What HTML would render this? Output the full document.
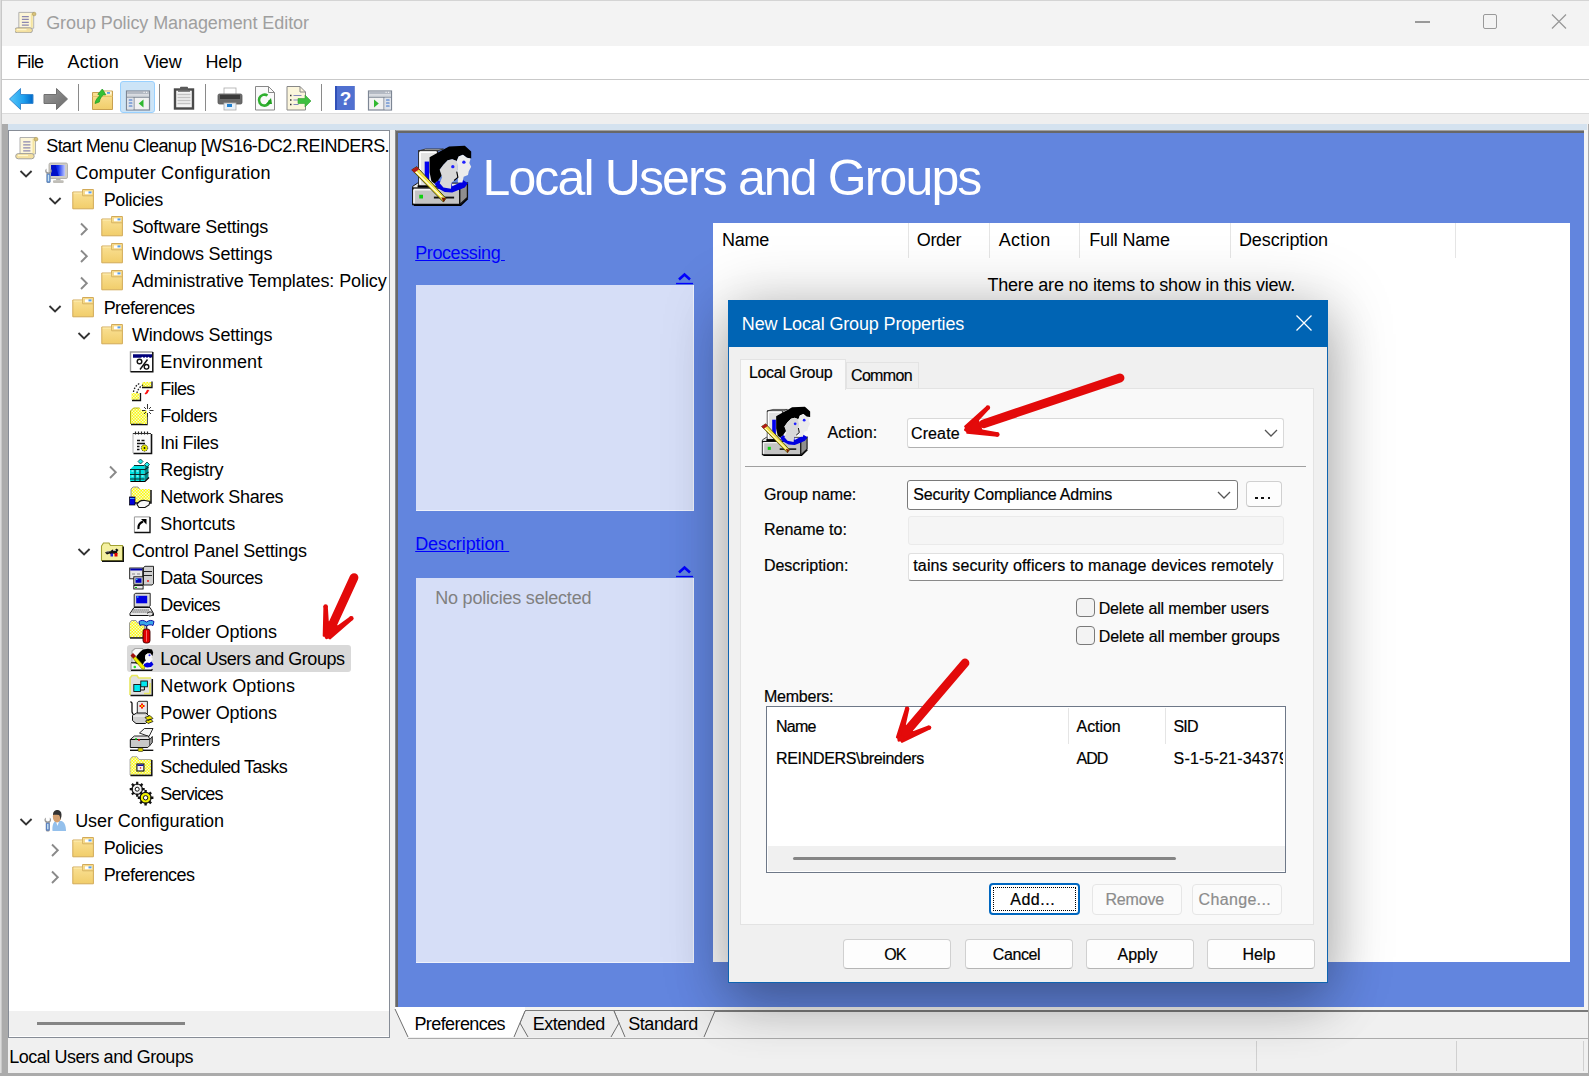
<!DOCTYPE html>
<html><head><meta charset="utf-8"><style>
html,body{margin:0;padding:0;width:1589px;height:1076px;overflow:hidden;background:#f0f0f0}
body{position:relative;font-family:"Liberation Sans",sans-serif}
div,svg{position:absolute}
.t{white-space:pre;line-height:1}
</style></head><body>
<svg width="0" height="0" style="left:0;top:0"><defs><linearGradient id="gscreen" x1="0" x2="1" y1="0" y2="0"><stop offset="0" stop-color="#0000d0"/><stop offset="0.5" stop-color="#1030f0"/><stop offset="1" stop-color="#c0c8ff"/></linearGradient>
<linearGradient id="gfold" x1="0" x2="0" y1="0" y2="1"><stop offset="0" stop-color="#fbe39a"/><stop offset="1" stop-color="#f1cd6a"/></linearGradient>
<linearGradient id="gback" x1="0" x2="1" y1="0" y2="0"><stop offset="0" stop-color="#58c8fa"/><stop offset="0.6" stop-color="#1fa0ee"/><stop offset="1" stop-color="#0068c8"/></linearGradient>
<linearGradient id="gfwd" x1="0" x2="1" y1="0" y2="1"><stop offset="0" stop-color="#9a9a9a"/><stop offset="1" stop-color="#6a6a6a"/></linearGradient>
<pattern id="pdot" width="3" height="3" patternUnits="userSpaceOnUse"><rect width="3" height="3" fill="#ffff00"/><rect width="1.5" height="1.5" fill="#f4f4d8"/><rect x="1.5" y="1.5" width="1.5" height="1.5" fill="#f4f4d8"/></pattern>

<g id="i-scroll">
 <path d="M4 2.5h15.5v16.5H4z" fill="#fdf6d8" stroke="#a8a8a8" stroke-width="0.9"/>
 <path d="M17.5 3.5v15" stroke="#f4e4a0" stroke-width="2"/>
 <path d="M7.2 6.8h7.2M7.2 9.8h7.2M7.2 12.8h7.2M7.2 15.8h7.2" stroke="#8c88b0" stroke-width="1.3"/>
 <circle cx="20" cy="4.2" r="1.9" fill="#d8c078" stroke="#a89858" stroke-width="0.6"/>
 <rect x="-0.3" y="18.6" width="18.5" height="5.2" rx="2.6" fill="#f4e0a0" stroke="#9a9a9a" stroke-width="0.9"/>
 <path d="M2 20.5h10" stroke="#fff8d0" stroke-width="1.2"/>
</g>
<g id="i-computer">
 <rect x="5" y="3" width="18.5" height="15.5" rx="1.5" fill="#cfcdc6" stroke="#a8a6a0" stroke-width="0.8"/>
 <rect x="7.2" y="5" width="13.8" height="11" fill="url(#gscreen)"/>
 <path d="M7.2 5h4.5l3 11H7.2z" fill="#0010c8"/>
 <path d="M12.5 18.5h3.5l1 2h-5.5z" fill="#b8b6b0"/>
 <rect x="9" y="20.3" width="10.7" height="2.7" rx="1" fill="#c0beb8"/>
 <path d="M2.5 8.5c-1.5 1-1.8 3-0.6 4.5l0.6 0.6v8c0 1 0.8 1.5 2 1.5s2-0.5 2-1.5v-8l0.6-0.6c1.2-1.5 0.9-3.5-0.6-4.5v3l-2 1l-2-1z" fill="#9a9a9a"/>
 <rect x="2.6" y="13.8" width="3.8" height="9" rx="1.2" fill="#5a88c8"/>
 <rect x="3.8" y="14.8" width="1.4" height="6.5" fill="#c8e4f4"/>
</g>
<g id="i-folder">
 <path d="M0.8 5h9.8v-2.5h10.8v19.3H0.8z" fill="url(#gfold)" stroke="#d2aa58" stroke-width="1"/>
 <rect x="12" y="3.6" width="8.5" height="4.6" fill="#f3d27a"/>
 <rect x="12.8" y="4.3" width="7" height="3" fill="#ffffff"/>
 <rect x="16.5" y="4.4" width="3" height="2" fill="#5aa0e8"/>
 <path d="M10.6 5v3.8h10.8" stroke="#d8b462" stroke-width="1" fill="none"/>
 <path d="M1.5 6h8.5" stroke="#fff3c0" stroke-width="0.8"/>
</g>
<g id="i-cpfolder">
 <path d="M0.5 8l2-3h5.5l1.5 2.5H21.5V22.5H0.5z" fill="#f4f0a0" stroke="#a0a030" stroke-width="1.1"/>
 <path d="M1 23.3H22.3V8.5" stroke="#111" stroke-width="1.4" fill="none"/>
 <path d="M4 14.5l3-1.5l2 0.5l2.5-2l2 1l2-2l2 1.5l-1.5 2l0.5 1.5l-2 1l-2-1l-1.5 1.5l-2.5-1.5l-2.5 1z" fill="#111"/>
 <rect x="13.5" y="15" width="3" height="3.5" fill="#e00000"/>
 <rect x="9.5" y="15.5" width="2.5" height="3" fill="#2020d0"/>
 <path d="M5 13.8h3M12 12.5h3" stroke="#c8c8c8" stroke-width="0.8"/>
</g>
<g id="i-env">
 <rect x="0.5" y="3" width="22.3" height="19.8" fill="#ffffff"/>
 <path d="M0.5 22.8V3H22.8" stroke="#9a9a9a" stroke-width="1.4" fill="none"/>
 <path d="M0.5 22.8H22.8V3" stroke="#111" stroke-width="1.5" fill="none"/>
 <path d="M3 5.2H22V8.2L20 9L18.5 7.8L17 9L15.5 7.8L14 9L12.5 7.8L11 8.8H3z" fill="#00007a"/>
 <circle cx="9.5" cy="12.5" r="2.3" fill="none" stroke="#111" stroke-width="1.4"/>
 <circle cx="16.5" cy="17.8" r="2.3" fill="none" stroke="#111" stroke-width="1.4"/>
 <path d="M17.5 10.5L10 20.5" stroke="#111" stroke-width="1.4"/>
</g>
<g id="i-files">
 <path d="M12 6h9.5v5.5H12z" fill="url(#pdot)"/>
 <path d="M12 11.5h10V5.5" stroke="#111" stroke-width="1.3" fill="none"/>
 <path d="M1.5 17h8v7h-8z" fill="url(#pdot)"/>
 <path d="M2 24.5h8.5V17" stroke="#111" stroke-width="1.3" fill="none"/>
 <path d="M3.5 16c0.5-4 3-7 6.5-9M7 17c0.5-3 2.5-6 6-8" stroke="#222" stroke-width="1.3" stroke-dasharray="1.6 1.4" fill="none"/>
 <path d="M14.5 17.5l1.5-1.5l0.5-1.5l1.5-1l1.5 1.5l-1.2 0.5l-0.5 1.5l-2 1.5z" fill="#ff1010"/>
</g>
<g id="i-folders">
 <path d="M0.5 8l3-3h6l2.5 2.5V21H0.5z" fill="url(#pdot)"/>
 <path d="M1 21.5h16v-10" stroke="#111" stroke-width="1.4" fill="none"/>
 <path d="M12 7.5h5V21H12" fill="url(#pdot)"/>
 <path d="M0.5 21V8l3-3h6" stroke="#a8a800" stroke-width="0.9" fill="none"/>
 <path d="M17.5 1v5M17.5 10v4M12 7.5h3.5M19.5 7.5h4M14 4l2 2M21 4l-2 2M14 11l2-2M21 11l-2-2" stroke="#333" stroke-width="1"/>
</g>
<g id="i-ini">
 <rect x="3" y="3" width="18" height="20.5" rx="1" fill="#fbfbfb"/>
 <path d="M3 23V3" stroke="#c0c0c0" stroke-width="1.2"/>
 <path d="M3.5 23.5H21.5V4" stroke="#111" stroke-width="1.6" fill="none"/>
 <path d="M3 3.5H21" stroke="#333" stroke-width="1"/>
 <path d="M5.5 1.5v3M8.5 1.5v3M11.5 1.5v3M14.5 1.5v3M17.5 1.5v3" stroke="#222" stroke-width="1.2"/>
 <path d="M7 10.5h3M11.5 10.5h3M7 13.5h8M7 16.5h2.5M7 19.5h2.5" stroke="#111" stroke-width="1.4"/>
 <circle cx="14.5" cy="18" r="3.2" fill="#e8e800" stroke="#333" stroke-width="0.9" stroke-dasharray="1.3 0.8"/>
 <circle cx="14.5" cy="18" r="0.9" fill="#111"/>
</g>
<g id="i-registry">
 <path d="M0 12.5l4-4h10.5v16H0z" fill="#00e0e0"/>
 <path d="M14.5 8.5l4-2.5v14.5l-4 4z" fill="#008a8a"/>
 <path d="M0 12.5h14.5M0 17.5h14.5M0 22h14.5M5 12.5v12M10 12.5v12M4 8.5h10.5M14.5 13l4-3M14.5 18l4-3" stroke="#0a2a2a" stroke-width="1.1"/>
 <path d="M0.5 24.5h14.5l4-4" stroke="#000" stroke-width="1.2" fill="none"/>
 <path d="M1.5 14h2M6.5 14h2M1.5 19h2M6.5 19h2M11.5 19h2" stroke="#d8ffff" stroke-width="1.2"/>
 <path d="M8 4.5l2.5-2.5l2.5 2.5l-2.5 2.5z" fill="#20e8e8" stroke="#0a3a3a" stroke-width="0.8"/>
 <path d="M14.5 7.5l2.5-2.5l2.5 2.5l-2.5 2.5z" fill="#20e8e8" stroke="#0a3a3a" stroke-width="0.8"/>
</g>
<g id="i-shares">
 <path d="M1 5l2-2h5l1.5 2H20.5V18.5H1z" fill="url(#pdot)"/>
 <path d="M1 18.5V5l2-2h5l1.5 2" stroke="#888" stroke-width="0.9" fill="none"/>
 <path d="M2 19h19V6" stroke="#111" stroke-width="1.5" fill="none"/>
 <path d="M7 20.5c1.5-3 5-4.5 8-4l5 1l-1 3.5l-4 2.5h-6z" fill="#f8f8f8" stroke="#111" stroke-width="1.1"/>
 <rect x="-0.5" y="13" width="5.5" height="8" fill="#0000d8" stroke="#000" stroke-width="0.7"/>
 <path d="M0 14.5h4.5" stroke="#40a0ff" stroke-width="1"/>
</g>
<g id="i-shortcut">
 <rect x="4.4" y="5.9" width="15.6" height="15.6" fill="#fff"/>
 <path d="M4.4 21.5V5.9H20" stroke="#9a9a9a" stroke-width="1" fill="none"/>
 <path d="M4.4 21.5H20V5.9" stroke="#111" stroke-width="1.4" fill="none"/>
 <path d="M8.5 18c-0.5-3 1-6 4.5-7.5" stroke="#000" stroke-width="2.2" fill="none"/>
 <path d="M11 8h5.5v5.5z" fill="#000"/>
</g>
<g id="i-datasrc">
 <rect x="-0.3" y="3" width="13" height="10.8" fill="#e8e8e8" stroke="#111" stroke-width="0.9"/>
 <rect x="0.3" y="3.5" width="12" height="2" fill="#0000b0"/>
 <path d="M2 9h3M7 9h3" stroke="#888" stroke-width="1.2"/>
 <path d="M13.5 2.5l1.5-1.2h8.5v17.5l-1.5 1.2h-8.5z" fill="#d0d0d0" stroke="#111" stroke-width="0.9"/>
 <path d="M13.5 6.5h8.5M13.5 10.5h8.5" stroke="#111" stroke-width="0.9"/>
 <circle cx="18" cy="16" r="0.9" fill="#e00"/>
 <rect x="3.8" y="11.8" width="9.3" height="7.5" fill="#d8d8d8" stroke="#111" stroke-width="0.9"/>
 <rect x="5.5" y="13.3" width="6" height="4.5" fill="#0000c0"/>
 <rect x="6" y="13.8" width="1.5" height="1" fill="#40ffff"/>
 <rect x="3.8" y="20.5" width="9.3" height="3.5" fill="#e8e8e8" stroke="#111" stroke-width="0.9"/>
 <rect x="5" y="22" width="2" height="1" fill="#10c010"/>
</g>
<g id="i-devices">
 <path d="M4.2 2.3l1.5-1h14.5v12.5l-1.5 1H4.2z" fill="#d8d8d8" stroke="#111" stroke-width="0.9"/>
 <rect x="6.2" y="3.8" width="11" height="7.5" fill="#0000e0"/>
 <rect x="7" y="4.5" width="1.5" height="1" fill="#40ffff"/>
 <path d="M0 21.5l4-6h16l3.5 6v2H0z" fill="#e8e8e8" stroke="#111" stroke-width="1"/>
 <path d="M3.5 18h16M2.5 20h18" stroke="#222" stroke-width="0.9" stroke-dasharray="1.2 0.8"/>
 <path d="M17 21.5c2-2 5-2 6 0c0 2-2 2.5-4 2.5" fill="#e0e0e0" stroke="#111" stroke-width="0.9"/>
</g>
<g id="i-folderopt">
 <path d="M-0.5 4l2-2.5h4.5l1.5 2.5H14.5V18.5H-0.5z" fill="url(#pdot)" stroke="#888" stroke-width="0.8"/>
 <path d="M0 19H15" stroke="#111" stroke-width="1.4"/>
 <rect x="13" y="10" width="7" height="14" rx="2.5" fill="#e00000" stroke="#400" stroke-width="0.9"/>
 <path d="M16.5 11.5v11" stroke="#ff8080" stroke-width="0.8"/>
 <path d="M16.5 3v7" stroke="#333" stroke-width="1.6"/>
 <path d="M9 2.5c2-1.5 5-1.5 7.5 0.5c2.5-2 5.5-2 7.5-0.5l-1 4c-2-1-4-1-6.5 0.5c-2.5-1.5-4.5-1.5-6.5-0.5z" fill="#3aa8e8" stroke="#0000a0" stroke-width="0.9"/>
</g>
<g id="i-users">
 <path d="M0.9 21.5L3.5 19.8H30.1L26 22.5H0.9Z" fill="#e8e8e8" stroke="#111" stroke-width="0.5"/>
 <path d="M0.9 22.5H26V31.2H0.9Z" fill="#c4c4c4" stroke="#111" stroke-width="0.7"/>
 <path d="M1.6 23.3H25.3M1.6 23.3V30.5" stroke="#f4f4f4" stroke-width="0.9"/>
 <path d="M26 22.5L30.1 19.8V27.5L26 31.2Z" fill="#8e8e8e" stroke="#111" stroke-width="0.7"/>
 <path d="M1.5 31.6H26.5L30.3 28" stroke="#000" stroke-width="0.8" fill="none"/>
 <rect x="4.4" y="26" width="2" height="2" fill="#10d010"/>
 <path d="M12.2 27.5H23" stroke="#111" stroke-width="1"/>
 <path d="M4.1 2.6L7.8 1.6H17.3L14.2 2.6Z" fill="#d8d8d8" stroke="#333" stroke-width="0.5"/>
 <path d="M4.1 2.6H14.2V21.5H4.1Z" fill="#e2e2e2" stroke="#222" stroke-width="0.6"/>
 <path d="M4.8 3.3H13.5M4.8 3.3V20.5" stroke="#fff" stroke-width="0.9"/>
 <path d="M3.5 21.6H12" stroke="#000" stroke-width="1.2"/>
 <path d="M7.3 8.3H9.7V18.1H7.3Z" fill="#0000f0"/>
 <path d="M9.9 6L14.2 3.6L17.3 1.9L20.3 0.2L28.7 -0.1L32.1 2.9L32.1 6.6L29.8 6.3L27.7 4.6L25.4 5.6L24.4 8L22 7L19.6 7.6L17.3 10L15.3 12.7L16.6 15.4L14.6 18.1L12.6 20.1L10.9 18.8L9.9 14Z" fill="#000"/>
 <path d="M12.6 20.1L14.6 18.4L17.3 19.8L21.7 19.4L22 21.5L25.4 19.8L27.7 18.1L30.4 19.8L28.7 22.1L25.4 23.5L22 24.8L18 24.5L14.2 22.5Z" fill="#0000e0"/>
 <path d="M15.3 12.7L17.3 10L19.6 7.6L22 7L24.4 8L25 12L24.4 13.7L25 16.7L23 18.4L21.7 19.4L21.3 22.8L17.3 22.1L15.3 19.8L16.6 16.7Z" fill="#d8d8d8"/>
 <path d="M25.4 5.6L27.7 4.6L29.8 6.3L31.8 6.6L31.1 9L32.1 11L30.8 13.4L30.4 15.4L28.1 16.4L27.4 19.4L25 19.4L25 16.7L24.4 13.7L25 12L24.4 8Z" fill="#ececec"/>
 <path d="M24.4 13.7L25 16.7L23 18.4" stroke="#000" stroke-width="0.6" fill="none"/>
 <circle cx="22.3" cy="11" r="0.9" fill="#2020ff"/>
 <circle cx="28.2" cy="8.6" r="0.9" fill="#2020ff"/>
 <path d="M0.4 12.7L3.1 11L18.6 27.9L17.3 29.9Z" fill="#f2e24a" stroke="#3a3a00" stroke-width="0.5"/>
 <path d="M1.8 12.9L17.8 28.6" stroke="#fffff0" stroke-width="0.6"/>
 <path d="M0.4 12.7L3.1 11L4.4 12.4L1.7 14.2Z" fill="#b01818"/>
 <path d="M16.2 27.3L18.6 27.9L17.3 29.9Z" fill="#7a1a00"/>
</g>
<g id="i-netopt">
 <path d="M0 5l2-2.5h5l1.5 2.5H21.7V22H0z" fill="#e0e0e0"/>
 <path d="M0 22V5l2-2.5h5l1.5 2.5H21" stroke="#e8e860" stroke-width="1.6" fill="none"/>
 <path d="M14 20.5h6.5M20 10v10" stroke="#e8e860" stroke-width="1.6"/>
 <path d="M0.5 22.5H22.3V6" stroke="#111" stroke-width="1.5" fill="none"/>
 <rect x="10.8" y="8" width="6.6" height="5.8" fill="#00e8f0" stroke="#111" stroke-width="0.9"/>
 <rect x="3.8" y="11.5" width="6.6" height="7" fill="#00e8f0" stroke="#111" stroke-width="0.9"/>
 <path d="M10.4 17h4v-3.2" stroke="#111" stroke-width="1" fill="none"/>
</g>
<g id="i-power">
 <path d="M0.5 1.5l1.5 1.5v8.5c0 2 1 3 3 4" stroke="#111" stroke-width="1.3" fill="none"/>
 <path d="M7.3 2.5l1.5-1.2h8.6v12.5H7.3z" fill="#e8e8e8" stroke="#111" stroke-width="0.9"/>
 <path d="M12 3.5v5M9.5 6h5" stroke="#ff0000" stroke-width="2"/>
 <circle cx="12" cy="6" r="1.2" fill="#f0c000"/>
 <path d="M2.5 15.5l4-2.5h9.5l2.5 2.5v5l-3 3H6l-3.5-3z" fill="#d0d0d0" stroke="#111" stroke-width="1"/>
 <path d="M3 16h12" stroke="#f8f8f8" stroke-width="1.2"/>
 <path d="M15 17.5l5-2l3 3l-5 2zM15.5 21l5-2l2.5 2.5l-5 2z" fill="#e8e000" stroke="#111" stroke-width="0.8"/>
</g>
<g id="i-printers">
 <path d="M9.5 6l5-4.5h8.5l-4 8z" fill="#f4f4f4" stroke="#111" stroke-width="0.9"/>
 <path d="M0.3 12.5l4-3.5h14l1.5 3.5z" fill="#e0e0e0" stroke="#111" stroke-width="0.9"/>
 <path d="M0.3 12.5h19.5v6l-2 2H0.3z" fill="#c8c8c8" stroke="#111" stroke-width="1"/>
 <path d="M19.8 12.5l2.5-3v6l-2.5 3" fill="#a0a0a0" stroke="#111" stroke-width="0.9"/>
 <circle cx="6" cy="12" r="1" fill="#10c010"/><circle cx="9" cy="13" r="1" fill="#e01010"/>
 <path d="M0 23.3h23.3" stroke="#111" stroke-width="1.4"/>
 <rect x="8" y="21" width="5" height="3.5" rx="1" fill="#d8d000" stroke="#333" stroke-width="0.6"/>
</g>
<g id="i-sched">
 <path d="M0 5.5l2-2.8h5l2 2.8h12.3V21H0z" fill="url(#pdot)" stroke="#999" stroke-width="0.8"/>
 <path d="M0.5 21.6H21.8V6" stroke="#111" stroke-width="1.5" fill="none"/>
 <rect x="6.9" y="10" width="7" height="7" fill="#f4f4f4" stroke="#111" stroke-width="1.1"/>
 <rect x="7.4" y="10.5" width="6" height="1.5" fill="#1010a0"/>
 <rect x="9.9" y="13.3" width="1.3" height="1.3" fill="#e00"/>
</g>
<g id="i-services">
 <g transform="translate(7.2 8.2)"><circle r="5.2" fill="#f0f0f0" stroke="#111" stroke-width="1.2"/>
 <path d="M0-7.5v3M0 4.5v3M-7.5 0h3M4.5 0h3M-5.3-5.3l2 2M3.3 3.3l2 2M-5.3 5.3l2-2M3.3-3.3l2-2" stroke="#111" stroke-width="2.2"/>
 <circle r="2" fill="#fff" stroke="#111" stroke-width="1"/></g>
 <g transform="translate(15.6 16.8)"><circle r="5.5" fill="#f0f000" stroke="#111" stroke-width="1.2"/>
 <path d="M0-7.8v3M0 4.8v3M-7.8 0h3M4.8 0h3M-5.5-5.5l2 2M3.5 3.5l2 2M-5.5 5.5l2-2M3.5-3.5l2-2" stroke="#111" stroke-width="2.4"/>
 <circle r="2.2" fill="#fff" stroke="#111" stroke-width="1"/></g>
</g>
<g id="i-user">
 <path d="M8.5 23c-0.5-4 0.5-9 3-10h6c3 1 4.5 5 4.5 10z" fill="#94c0ec"/>
 <path d="M12 13.5l1.5 4.5l1.5-4.5z" fill="#ffffff"/>
 <ellipse cx="13" cy="8.5" rx="4.2" ry="6" fill="#d4a070"/>
 <path d="M9 7c0-4 2.5-5 4.5-5s4 1.5 4 4.5c0 2-0.5 4-1.5 5.5c0.5-2 0-4-1-5c-2 0-4-0.5-6 0z" fill="#333"/>
 <path d="M1.8 9.5c-1.5 1-1.8 3-0.6 4.5l0.6 0.6v7.5c0 1 0.8 1.5 2 1.5s2-0.5 2-1.5v-7.5l0.6-0.6c1.2-1.5 0.9-3.5-0.6-4.5v3l-2 1l-2-1z" fill="#9a9a9a"/>
 <rect x="1.9" y="14.8" width="3.8" height="8" rx="1.2" fill="#5a80c0"/>
 <rect x="3.1" y="15.8" width="1.4" height="5.5" fill="#c8e4f4"/>
</g>

<!-- toolbar (absolute coords) -->
<g id="t-back"><path d="M9.5 99l11-10.5v6h12.5v9H20.5v6z" fill="url(#gback)" stroke="#3a8ad0" stroke-width="1"/></g>
<g id="t-fwd"><path d="M67.5 99l-11-10.5v6H44v9h12.5v6z" fill="url(#gfwd)" stroke="#707070" stroke-width="1"/></g>
<g id="t-upfolder">
 <path d="M92.5 92.5h8l1.5 -1.5h10.5v18.5h-20z" fill="url(#gfold)" stroke="#c8a050" stroke-width="1"/>
 <rect x="104.5" y="91.5" width="7" height="3" fill="#fff6d8"/>
 <rect x="107" y="92" width="3" height="1.8" fill="#5aa0e8"/>
 <path d="M92.5 96.5h20" stroke="#e6c46a" stroke-width="1"/>
 <path d="M95 103.5c0.5-3.5 2.5-6 5-8l-2.2-1.2l4.5-5.3l3.5 5.8l-2.5 0.2c-2 1.5-3.5 4-4 7z" fill="#34c034" stroke="#1f9a1f" stroke-width="0.7" stroke-linejoin="round"/>
</g>
<g id="t-panel">
 <rect x="126.5" y="91" width="23" height="19" fill="#f2f2f2" stroke="#7d8694" stroke-width="1.2"/>
 <rect x="127.2" y="91.7" width="21.6" height="2.6" fill="#b4bac4"/>
 <rect x="127.2" y="94.6" width="21.6" height="2.2" fill="#d4d8de"/>
 <path d="M146 92.3h1.2M143.5 92.3h1.2" stroke="#fff" stroke-width="1"/>
 <path d="M126.5 97.2h23M134 97.2V110" stroke="#7d8694" stroke-width="1.1"/>
 <rect x="127.3" y="97.8" width="6.2" height="11.6" fill="#dde2ea"/>
 <path d="M129.3 100h2.6M129.3 103h2.6M129.3 106h2.6" stroke="#3a70c8" stroke-width="1.2" stroke-linecap="round"/>
 <path d="M143.5 99.5v8l-4.8-4z" fill="#30b830"/>
</g>
<g id="t-clip">
 <rect x="175" y="89.5" width="18" height="19" fill="#f4f4f4" stroke="#4a4a4a" stroke-width="2.4"/>
 <rect x="180" y="86.8" width="8" height="3.5" rx="0.8" fill="#5a5a5a"/>
 <rect x="178" y="89.8" width="12" height="2" fill="#6a6a6a"/>
 <path d="M177.5 94.5h13M177.5 97.5h13M177.5 100.5h13M177.5 103.5h13" stroke="#c4c4c4" stroke-width="1.3"/>
</g>
<g id="t-print">
 <rect x="224" y="88" width="12" height="7" fill="#fff" stroke="#aaa" stroke-width="0.8"/>
 <rect x="218" y="94" width="24" height="10" rx="1.5" fill="#6a6a6a" stroke="#555" stroke-width="0.8"/>
 <rect x="220" y="95" width="20" height="4" fill="#3a3a3a"/>
 <rect x="224" y="103" width="12" height="7" fill="#e8f0f8" stroke="#aaa" stroke-width="0.8"/>
 <rect x="227" y="104" width="5" height="3" fill="#2080d0"/>
</g>
<g id="t-refresh">
 <path d="M255.5 86.5h13l6 6v17.5h-19z" fill="#fafafa" stroke="#888" stroke-width="1"/>
 <path d="M268.5 86.5v6h6" fill="none" stroke="#888" stroke-width="1"/>
 <path d="M270 100a5.5 5.5 0 1 1 -2.5 -4.5" fill="none" stroke="#30b030" stroke-width="2.6"/>
 <path d="M266 104l6 0l-1-6z" fill="#20a020"/>
</g>
<g id="t-export">
 <path d="M287 86.5h13l5.5 5.5v18h-18.5z" fill="#fcf6dc" stroke="#888" stroke-width="1"/>
 <path d="M300 86.5v5.5h5.5" fill="none" stroke="#888" stroke-width="1"/>
 <path d="M290 95.5h1.5M290 100h1.5M290 104.5h1.5" stroke="#333" stroke-width="1.5"/>
 <path d="M293.5 95.5h8M293.5 100h5M293.5 104.5h5" stroke="#8888bb" stroke-width="1.2"/>
 <path d="M298 98.5h7v-3.5l6 6l-6 6v-3.5h-7z" fill="#40c040" stroke="#30a030" stroke-width="0.6"/>
</g>
<g id="t-help">
 <rect x="335" y="86" width="19.5" height="24" fill="#3050b8"/>
 <rect x="337" y="86" width="17.5" height="24" fill="#5070d0"/>
 <text x="345.5" y="105" font-size="19" text-anchor="middle" font-family="Liberation Sans" font-weight="700" fill="#fff">?</text>
</g>
<g id="t-panel2">
 <rect x="368.5" y="91" width="23" height="19" fill="#f2f2f2" stroke="#7d8694" stroke-width="1.2"/>
 <rect x="369.2" y="91.7" width="21.6" height="2.6" fill="#b4bac4"/>
 <rect x="369.2" y="94.6" width="21.6" height="2.2" fill="#d4d8de"/>
 <path d="M388 92.3h1.2M385.5 92.3h1.2" stroke="#fff" stroke-width="1"/>
 <path d="M368.5 97.2h23M384 97.2V110" stroke="#7d8694" stroke-width="1.1"/>
 <rect x="384.5" y="97.8" width="6.2" height="11.6" fill="#dde2ea"/>
 <path d="M386.5 100h2.6M386.5 103h2.6M386.5 106h2.6" stroke="#3a70c8" stroke-width="1.2" stroke-linecap="round"/>
 <path d="M374 99.5v8l4.8-4z" fill="#30b830"/>
</g>

<g id="i-users16">
 <path d="M1.5 17h20v7.5H1.5z" fill="#f4f4f4"/>
 <path d="M1 16.8h20.5" stroke="#111" stroke-width="1.2"/>
 <path d="M1 24.3h20.5l1-1" stroke="#111" stroke-width="1.4" fill="none"/>
 <path d="M1 17v7" stroke="#9a9a9a" stroke-width="1"/>
 <circle cx="4.8" cy="21" r="1.3" fill="#20e020"/>
 <path d="M2 16V5l3-2.5h8" stroke="#a8a8a8" stroke-width="1.2" fill="#f8f8f8"/>
 <path d="M5.5 17L6.5 10L10 6L13 3.5L18 2.8L22 3.5L23.2 6.5L22.5 10L20.5 7.5L17.5 7.5L15.5 9L15 12L16 14.5L14 16L12.5 19L8.5 18.5z" fill="#000"/>
 <path d="M15.5 9L17.5 7.5L20.5 7.5L22 10L21.5 12L23 13L21.5 14.5L21.5 16.5L19 17.5L18.5 19.5H15L13.5 17L16 14.5L15 12z" fill="#f8f8f8"/>
 <circle cx="19.5" cy="9.3" r="1" fill="#2020ff"/>
 <path d="M14 18l3-1.5l2.5 0.5l2-1.5l2 3l-2.5 2.5l-4 0.5l-3-1z" fill="#0000e0"/>
 <path d="M1.5 10.5l2-2l11.5 12.5l-1 2.5l-2.5-1z" fill="#f0f000" stroke="#6a6a00" stroke-width="0.6"/>
 <path d="M0.5 9.5l2.5-2.5l3 3l-2.5 2.5z" fill="#a01010"/>
</g></defs></svg>
<div style="left:0px;top:0px;width:1589px;height:1076px;background:#f0f0f0"></div>
<div style="left:0px;top:0px;width:1589px;height:46px;background:#f3f3f3"></div>
<div style="left:0px;top:0px;width:1589px;height:1px;background:#d4d4d4"></div>
<svg style="left:14.5px;top:10px" width="23" height="23" viewBox="0 0 24 24"><use href="#i-scroll"/></svg>
<div class="t" style="left:46.20px;top:13.56px;font-size:18px;color:#9f9f9f;letter-spacing:-0.081px;font-weight:400;">Group Policy Management Editor</div>
<div style="left:1415px;top:21.3px;width:15px;height:1.3px;background:#999"></div>
<div style="left:1482.5px;top:14px;width:14.5px;height:14.5px;border:1.4px solid #999;border-radius:2px;box-sizing:border-box"></div>
<svg style="left:1550px;top:13px" width="18" height="18" viewBox="0 0 18 18"><path d="M2 1.5L16 15.5M16 1.5L2 15.5" stroke="#999" stroke-width="1.3"/></svg>
<div style="left:0px;top:46px;width:1589px;height:33px;background:#ffffff"></div>
<div style="left:0px;top:79px;width:1589px;height:1px;background:#c9c9c9"></div>
<div class="t" style="left:16.90px;top:52.56px;font-size:18px;color:#000;letter-spacing:-0.626px;font-weight:400;">File</div>
<div class="t" style="left:67.60px;top:52.56px;font-size:18px;color:#000;letter-spacing:0.212px;font-weight:400;">Action</div>
<div class="t" style="left:143.70px;top:52.56px;font-size:18px;color:#000;letter-spacing:-0.247px;font-weight:400;">View</div>
<div class="t" style="left:205.50px;top:52.56px;font-size:18px;color:#000;letter-spacing:-0.180px;font-weight:400;">Help</div>
<div style="left:0px;top:80px;width:1589px;height:33px;background:#ffffff"></div>
<div style="left:0px;top:113px;width:1589px;height:1px;background:#dcdcdc"></div>
<div style="left:0px;top:114px;width:1589px;height:10px;background:#efefef"></div>
<div style="left:2px;top:124px;width:1585px;height:6px;background:#d4e2ef"></div>
<div style="left:0px;top:0px;width:1px;height:1076px;background:#dcdcdc"></div>
<div style="left:1px;top:0px;width:1px;height:1076px;background:#c8c8c8"></div>
<div style="left:2px;top:124px;width:6px;height:950px;background:#ababab"></div>
<div style="left:0px;top:1073px;width:1589px;height:3px;background:#ababab"></div>
<div style="left:1588px;top:124px;width:1px;height:952px;background:#ababab"></div>
<div style="left:1584px;top:130px;width:4px;height:880px;background:#f5f5f5"></div>
<div style="left:120px;top:81px;width:35px;height:32px;background:#cce4f7;border:1px solid #99d1ff;border-radius:3px;box-sizing:border-box"></div>
<div style="left:77.5px;top:84px;width:1.3px;height:27px;background:#8a8a8a"></div>
<div style="left:158.5px;top:84px;width:1.3px;height:27px;background:#8a8a8a"></div>
<div style="left:205px;top:84px;width:1.3px;height:27px;background:#8a8a8a"></div>
<div style="left:320.8px;top:84px;width:1.3px;height:27px;background:#8a8a8a"></div>
<svg style="left:0;top:80px" width="400" height="34" viewBox="0 80 400 34">
<use href="#t-back"/><use href="#t-fwd"/><use href="#t-upfolder"/><use href="#t-panel"/><use href="#t-clip"/>
<use href="#t-print"/><use href="#t-refresh"/><use href="#t-export"/><use href="#t-help"/><use href="#t-panel2"/>
</svg>
<div style="left:8px;top:130px;width:382px;height:908px;background:#ffffff;border:1px solid #868c96;border-width:1.5px 1px 1px 1.5px;box-sizing:border-box"></div>
<div style="left:9px;top:1011px;width:380px;height:25px;background:#f0f0f0"></div>
<div style="left:37px;top:1021.5px;width:148px;height:3px;background:#858585"></div>
<div style="left:127px;top:645px;width:224px;height:27px;background:#d9d9d9;border-radius:3px"></div>
<div style="left:9px;top:131px;width:380px;height:880px;overflow:hidden">
<svg style="left:7px;top:3.5px;overflow:visible" width="24" height="24" viewBox="0 0 24 24"><use href="#i-scroll"/></svg>
<div class="t" style="left:37.20px;top:5.76px;font-size:18px;color:#000;letter-spacing:-0.560px;font-weight:400;">Start Menu Cleanup [WS16-DC2.REINDERS.INTRA] Policy</div>
<svg style="left:35px;top:29px;overflow:visible" width="24" height="24" viewBox="0 0 24 24"><use href="#i-computer"/></svg>
<div class="t" style="left:66.20px;top:32.76px;font-size:18px;color:#000;letter-spacing:0.205px;font-weight:400;">Computer Configuration</div>
<svg style="left:63px;top:56px;overflow:visible" width="24" height="24" viewBox="0 0 24 24"><use href="#i-folder"/></svg>
<div class="t" style="left:94.70px;top:59.76px;font-size:18px;color:#000;letter-spacing:-0.366px;font-weight:400;">Policies</div>
<svg style="left:92px;top:83px;overflow:visible" width="24" height="24" viewBox="0 0 24 24"><use href="#i-folder"/></svg>
<div class="t" style="left:122.90px;top:86.76px;font-size:18px;color:#000;letter-spacing:-0.293px;font-weight:400;">Software Settings</div>
<svg style="left:92px;top:110px;overflow:visible" width="24" height="24" viewBox="0 0 24 24"><use href="#i-folder"/></svg>
<div class="t" style="left:122.90px;top:113.76px;font-size:18px;color:#000;letter-spacing:-0.166px;font-weight:400;">Windows Settings</div>
<svg style="left:92px;top:137px;overflow:visible" width="24" height="24" viewBox="0 0 24 24"><use href="#i-folder"/></svg>
<div class="t" style="left:122.90px;top:140.76px;font-size:18px;color:#000;letter-spacing:-0.095px;font-weight:400;">Administrative Templates: Policy definitions (ADMX files)</div>
<svg style="left:63px;top:164px;overflow:visible" width="24" height="24" viewBox="0 0 24 24"><use href="#i-folder"/></svg>
<div class="t" style="left:94.70px;top:167.76px;font-size:18px;color:#000;letter-spacing:-0.577px;font-weight:400;">Preferences</div>
<svg style="left:92px;top:191px;overflow:visible" width="24" height="24" viewBox="0 0 24 24"><use href="#i-folder"/></svg>
<div class="t" style="left:122.90px;top:194.76px;font-size:18px;color:#000;letter-spacing:-0.166px;font-weight:400;">Windows Settings</div>
<svg style="left:121px;top:218px;overflow:visible" width="24" height="24" viewBox="0 0 24 24"><use href="#i-env"/></svg>
<div class="t" style="left:151.30px;top:221.76px;font-size:18px;color:#000;letter-spacing:0.087px;font-weight:400;">Environment</div>
<svg style="left:121px;top:245px;overflow:visible" width="24" height="24" viewBox="0 0 24 24"><use href="#i-files"/></svg>
<div class="t" style="left:151.30px;top:248.76px;font-size:18px;color:#000;letter-spacing:-0.781px;font-weight:400;">Files</div>
<svg style="left:121px;top:272px;overflow:visible" width="24" height="24" viewBox="0 0 24 24"><use href="#i-folders"/></svg>
<div class="t" style="left:151.30px;top:275.76px;font-size:18px;color:#000;letter-spacing:-0.474px;font-weight:400;">Folders</div>
<svg style="left:121px;top:299px;overflow:visible" width="24" height="24" viewBox="0 0 24 24"><use href="#i-ini"/></svg>
<div class="t" style="left:151.30px;top:302.76px;font-size:18px;color:#000;letter-spacing:-0.457px;font-weight:400;">Ini Files</div>
<svg style="left:121px;top:326px;overflow:visible" width="24" height="24" viewBox="0 0 24 24"><use href="#i-registry"/></svg>
<div class="t" style="left:151.30px;top:329.76px;font-size:18px;color:#000;letter-spacing:-0.389px;font-weight:400;">Registry</div>
<svg style="left:121px;top:353px;overflow:visible" width="24" height="24" viewBox="0 0 24 24"><use href="#i-shares"/></svg>
<div class="t" style="left:151.30px;top:356.76px;font-size:18px;color:#000;letter-spacing:-0.368px;font-weight:400;">Network Shares</div>
<svg style="left:121px;top:380px;overflow:visible" width="24" height="24" viewBox="0 0 24 24"><use href="#i-shortcut"/></svg>
<div class="t" style="left:151.30px;top:383.76px;font-size:18px;color:#000;letter-spacing:-0.137px;font-weight:400;">Shortcuts</div>
<svg style="left:92px;top:407px;overflow:visible" width="24" height="24" viewBox="0 0 24 24"><use href="#i-cpfolder"/></svg>
<div class="t" style="left:122.90px;top:410.76px;font-size:18px;color:#000;letter-spacing:-0.191px;font-weight:400;">Control Panel Settings</div>
<svg style="left:121px;top:434px;overflow:visible" width="24" height="24" viewBox="0 0 24 24"><use href="#i-datasrc"/></svg>
<div class="t" style="left:151.30px;top:437.76px;font-size:18px;color:#000;letter-spacing:-0.588px;font-weight:400;">Data Sources</div>
<svg style="left:121px;top:461px;overflow:visible" width="24" height="24" viewBox="0 0 24 24"><use href="#i-devices"/></svg>
<div class="t" style="left:151.30px;top:464.76px;font-size:18px;color:#000;letter-spacing:-0.617px;font-weight:400;">Devices</div>
<svg style="left:121px;top:488px;overflow:visible" width="24" height="24" viewBox="0 0 24 24"><use href="#i-folderopt"/></svg>
<div class="t" style="left:151.30px;top:491.76px;font-size:18px;color:#000;letter-spacing:-0.104px;font-weight:400;">Folder Options</div>
<svg style="left:121px;top:515px;overflow:visible" width="24" height="24" viewBox="0 0 24 24"><use href="#i-users16"/></svg>
<div class="t" style="left:151.30px;top:518.76px;font-size:18px;color:#000;letter-spacing:-0.445px;font-weight:400;">Local Users and Groups</div>
<svg style="left:121px;top:542px;overflow:visible" width="24" height="24" viewBox="0 0 24 24"><use href="#i-netopt"/></svg>
<div class="t" style="left:151.30px;top:545.76px;font-size:18px;color:#000;letter-spacing:0.110px;font-weight:400;">Network Options</div>
<svg style="left:121px;top:569px;overflow:visible" width="24" height="24" viewBox="0 0 24 24"><use href="#i-power"/></svg>
<div class="t" style="left:151.30px;top:572.76px;font-size:18px;color:#000;letter-spacing:-0.112px;font-weight:400;">Power Options</div>
<svg style="left:121px;top:596px;overflow:visible" width="24" height="24" viewBox="0 0 24 24"><use href="#i-printers"/></svg>
<div class="t" style="left:151.30px;top:599.76px;font-size:18px;color:#000;letter-spacing:-0.289px;font-weight:400;">Printers</div>
<svg style="left:121px;top:623px;overflow:visible" width="24" height="24" viewBox="0 0 24 24"><use href="#i-sched"/></svg>
<div class="t" style="left:151.30px;top:626.76px;font-size:18px;color:#000;letter-spacing:-0.599px;font-weight:400;">Scheduled Tasks</div>
<svg style="left:121px;top:650px;overflow:visible" width="24" height="24" viewBox="0 0 24 24"><use href="#i-services"/></svg>
<div class="t" style="left:151.30px;top:653.76px;font-size:18px;color:#000;letter-spacing:-0.828px;font-weight:400;">Services</div>
<svg style="left:35px;top:677px;overflow:visible" width="24" height="24" viewBox="0 0 24 24"><use href="#i-user"/></svg>
<div class="t" style="left:66.20px;top:680.76px;font-size:18px;color:#000;letter-spacing:-0.071px;font-weight:400;">User Configuration</div>
<svg style="left:63px;top:704px;overflow:visible" width="24" height="24" viewBox="0 0 24 24"><use href="#i-folder"/></svg>
<div class="t" style="left:94.70px;top:707.76px;font-size:18px;color:#000;letter-spacing:-0.366px;font-weight:400;">Policies</div>
<svg style="left:63px;top:731px;overflow:visible" width="24" height="24" viewBox="0 0 24 24"><use href="#i-folder"/></svg>
<div class="t" style="left:94.70px;top:734.76px;font-size:18px;color:#000;letter-spacing:-0.577px;font-weight:400;">Preferences</div>
</div>
<svg style="left:0;top:0" width="400" height="1000" viewBox="0 0 400 1000"><g fill="none" stroke-width="1.9"><path d="M20.5 171 L26.049999999999997 176.4 L31.599999999999998 171" stroke="#333"/><path d="M49.5 198 L55.05 203.4 L60.599999999999994 198" stroke="#333"/><path d="M81 223.5 L86.8 229.2 L81 235" stroke="#8a8a8a"/><path d="M81 250.5 L86.8 256.2 L81 262" stroke="#8a8a8a"/><path d="M81 277.5 L86.8 283.2 L81 289" stroke="#8a8a8a"/><path d="M49.5 306 L55.05 311.4 L60.599999999999994 306" stroke="#333"/><path d="M78.5 333 L84.05000000000001 338.4 L89.60000000000001 333" stroke="#333"/><path d="M110 466.5 L115.8 472.2 L110 478" stroke="#8a8a8a"/><path d="M78.5 549 L84.05000000000001 554.4 L89.60000000000001 549" stroke="#333"/><path d="M20.5 819 L26.049999999999997 824.4 L31.599999999999998 819" stroke="#333"/><path d="M52 844.5 L57.8 850.2 L52 856" stroke="#8a8a8a"/><path d="M52 871.5 L57.8 877.2 L52 883" stroke="#8a8a8a"/></g></svg>
<div style="left:395px;top:130px;width:1189px;height:877px;background:#6285de"></div>
<div style="left:395px;top:130px;width:1189px;height:1px;background:#a0a0a0"></div>
<div style="left:396px;top:131px;width:1188px;height:1.6px;background:#686868"></div>
<div style="left:395px;top:130px;width:1px;height:877px;background:#8a8a8a"></div>
<div style="left:396px;top:131px;width:1.6px;height:876px;background:#686868"></div>
<div style="left:395px;top:1007px;width:1193px;height:3px;background:#f3f3f0"></div>
<div style="left:525px;top:1010px;width:1063px;height:1.5px;background:#7a7a7a"></div>
<svg style="left:411px;top:146px;overflow:visible" width="60" height="60" viewBox="0 0 32 32"><use href="#i-users"/></svg>
<div class="t" style="left:482.50px;top:152.98px;font-size:50px;color:#ffffff;letter-spacing:-1.871px;font-weight:400;">Local Users and Groups</div>
<div class="t" style="left:415.20px;top:243.56px;font-size:18px;color:#0000ff;letter-spacing:-0.395px;font-weight:400;text-decoration:underline">Processing </div>
<svg style="left:675px;top:270px" width="19" height="15" viewBox="0 0 19 15"><path d="M4 9.5L9.5 4.5L15 9.5" fill="none" stroke="#0000ff" stroke-width="2.6"/><path d="M1 13.5H18" stroke="#0000ff" stroke-width="1.3"/></svg>
<div style="left:416px;top:285px;width:277px;height:225px;background:#d6def7;border-right:1px solid #eef1fb;border-bottom:1px solid #eef1fb"></div>
<div class="t" style="left:415.20px;top:535.16px;font-size:18px;color:#0000ff;letter-spacing:-0.086px;font-weight:400;text-decoration:underline">Description </div>
<svg style="left:675px;top:563px" width="19" height="15" viewBox="0 0 19 15"><path d="M4 9.5L9.5 4.5L15 9.5" fill="none" stroke="#0000ff" stroke-width="2.6"/><path d="M1 13.5H18" stroke="#0000ff" stroke-width="1.3"/></svg>
<div style="left:416px;top:578px;width:277px;height:384px;background:#d6def7;border-right:1px solid #eef1fb;border-bottom:1px solid #eef1fb"></div>
<div class="t" style="left:435.20px;top:588.56px;font-size:18px;color:#808080;letter-spacing:-0.199px;font-weight:400;">No policies selected</div>
<div style="left:713px;top:223px;width:857px;height:739px;background:#ffffff"></div>
<div style="left:907.5px;top:223px;width:1px;height:35px;background:#e5e5e5"></div>
<div style="left:989.4px;top:223px;width:1px;height:35px;background:#e5e5e5"></div>
<div style="left:1079.3px;top:223px;width:1px;height:35px;background:#e5e5e5"></div>
<div style="left:1229.5px;top:223px;width:1px;height:35px;background:#e5e5e5"></div>
<div style="left:1455px;top:223px;width:1px;height:35px;background:#e5e5e5"></div>
<div class="t" style="left:721.90px;top:231.36px;font-size:18px;color:#000;letter-spacing:-0.179px;font-weight:400;">Name</div>
<div class="t" style="left:916.70px;top:231.36px;font-size:18px;color:#000;letter-spacing:-0.302px;font-weight:400;">Order</div>
<div class="t" style="left:998.70px;top:231.36px;font-size:18px;color:#000;letter-spacing:0.329px;font-weight:400;">Action</div>
<div class="t" style="left:1089.20px;top:231.36px;font-size:18px;color:#000;letter-spacing:-0.158px;font-weight:400;">Full Name</div>
<div class="t" style="left:1238.90px;top:231.36px;font-size:18px;color:#000;letter-spacing:-0.085px;font-weight:400;">Description</div>
<div class="t" style="left:987.40px;top:275.76px;font-size:18px;color:#000;letter-spacing:-0.189px;font-weight:400;">There are no items to show in this view.</div>
<svg style="left:390px;top:1007px" width="400" height="32" viewBox="390 1007 400 32">
<path d="M614 1011L625 1037L704 1037L715 1011Z" fill="#ececec"/><path d="M614 1011L625 1037M704 1037L715 1011" fill="none" stroke="#6f6f6f" stroke-width="1"/>
<path d="M525 1011L520 1023L528 1037L611 1037L619 1023L614 1011Z" fill="#ececec"/><path d="M525 1011L520 1023L528 1037M611 1037L619 1023L614 1011" fill="none" stroke="#6f6f6f" stroke-width="1"/>
<path d="M395 1007L395 1009L408 1037L514 1037L525 1011L525 1007Z" fill="#ffffff" stroke="none"/>
<path d="M395 1009L408 1037M514 1037L525 1011" fill="none" stroke="#6f6f6f" stroke-width="1"/>
</svg>
<div class="t" style="left:414.40px;top:1015.16px;font-size:18px;color:#000;letter-spacing:-0.586px;font-weight:400;">Preferences</div>
<div class="t" style="left:532.70px;top:1015.16px;font-size:18px;color:#000;letter-spacing:-0.483px;font-weight:400;">Extended</div>
<div class="t" style="left:628.20px;top:1015.16px;font-size:18px;color:#000;letter-spacing:-0.419px;font-weight:400;">Standard</div>
<div style="left:408px;top:1038px;width:1180px;height:1px;background:#ababab"></div>
<div class="t" style="left:9.20px;top:1047.76px;font-size:18px;color:#000;letter-spacing:-0.468px;font-weight:400;">Local Users and Groups</div>
<div style="left:1256px;top:1041px;width:1px;height:30px;background:#d0d0d0"></div>
<div style="left:1456px;top:1041px;width:1px;height:30px;background:#d0d0d0"></div>
<div style="left:1583px;top:1041px;width:1px;height:30px;background:#d0d0d0"></div>
<div style="left:728px;top:300px;width:600px;height:683px;box-shadow:0 4px 60px rgba(0,0,0,0.25), 0 24px 50px rgba(0,0,0,0.2)"></div>
<div style="left:728px;top:300px;width:600px;height:683px;background:#f0f0f0;border:1.5px solid #0f64b0;border-top:none;box-sizing:border-box"></div>
<div style="left:728px;top:300px;width:600px;height:47px;background:#0064b4"></div>
<div class="t" style="left:741.80px;top:315.06px;font-size:18px;color:#ffffff;letter-spacing:-0.143px;font-weight:400;">New Local Group Properties</div>
<svg style="left:1295px;top:314px" width="18" height="18" viewBox="0 0 18 18"><path d="M1.5 1.5L16.5 16.5M16.5 1.5L1.5 16.5" stroke="#ffffff" stroke-width="1.3"/></svg>
<div style="left:740px;top:388px;width:574px;height:537px;background:#f9f9f9;border:1px solid #e3e3e3;box-sizing:border-box"></div>
<div style="left:846px;top:361.5px;width:73px;height:26.5px;background:#f0f0f0;border:1px solid #e3e3e3;border-bottom:none;box-sizing:border-box"></div>
<div style="left:740px;top:359px;width:106px;height:31px;background:#f9f9f9;border:1px solid #e3e3e3;border-bottom:none;box-sizing:border-box"></div>
<div class="t" style="left:748.90px;top:364.66px;font-size:16px;color:#000;letter-spacing:-0.342px;font-weight:400;-webkit-text-stroke:0.2px currentColor;">Local Group</div>
<div class="t" style="left:851.00px;top:367.76px;font-size:16px;color:#000;letter-spacing:-0.668px;font-weight:400;-webkit-text-stroke:0.2px currentColor;">Common</div>
<svg style="left:760.5px;top:406.6px;overflow:visible" width="49" height="49" viewBox="0 0 32 32"><use href="#i-users"/></svg>
<div class="t" style="left:827.40px;top:424.96px;font-size:16px;color:#000;letter-spacing:0.141px;font-weight:400;-webkit-text-stroke:0.2px currentColor;">Action:</div>
<div style="left:907px;top:418px;width:377px;height:30px;background:#ffffff;border:1px solid #d9d9d9;border-bottom-color:#b0b0b0;border-radius:3px;box-sizing:border-box"></div>
<div class="t" style="left:911.00px;top:426.46px;font-size:16px;color:#000;letter-spacing:0.113px;font-weight:400;-webkit-text-stroke:0.2px currentColor;">Create</div>
<svg style="left:1263px;top:427px" width="16" height="12" viewBox="0 0 16 12"><path d="M2 3L8 9L14 3" fill="none" stroke="#555" stroke-width="1.3"/></svg>
<div style="left:745px;top:465.5px;width:561px;height:1.5px;background:#a0a0a0"></div>
<div class="t" style="left:763.90px;top:486.66px;font-size:16px;color:#000;letter-spacing:-0.117px;font-weight:400;-webkit-text-stroke:0.2px currentColor;">Group name:</div>
<div style="left:907px;top:479.5px;width:331px;height:30.5px;background:#ffffff;border:1.5px solid #7a7a7a;border-radius:3px;box-sizing:border-box"></div>
<div class="t" style="left:913.30px;top:486.66px;font-size:16px;color:#000;letter-spacing:-0.186px;font-weight:400;-webkit-text-stroke:0.2px currentColor;">Security Compliance Admins</div>
<svg style="left:1216px;top:489px" width="16" height="12" viewBox="0 0 16 12"><path d="M2 3L8 9L14 3" fill="none" stroke="#555" stroke-width="1.3"/></svg>
<div style="left:1246px;top:481px;width:36px;height:26px;background:#fdfdfd;border:1px solid #d0d0d0;border-bottom-color:#b8b8b8;border-radius:4px;box-sizing:border-box"></div>
<div style="left:1255.3px;top:496.9px;width:2.4px;height:2.4px;background:#111"></div>
<div style="left:1261.4px;top:496.9px;width:2.4px;height:2.4px;background:#111"></div>
<div style="left:1267.5px;top:496.9px;width:2.4px;height:2.4px;background:#111"></div>
<div class="t" style="left:763.90px;top:521.86px;font-size:16px;color:#000;letter-spacing:0.029px;font-weight:400;-webkit-text-stroke:0.2px currentColor;">Rename to:</div>
<div style="left:907.5px;top:516px;width:376px;height:28.5px;background:#f5f5f5;border:1px solid #eaeaea;border-radius:3px;box-sizing:border-box"></div>
<div class="t" style="left:763.90px;top:557.76px;font-size:16px;color:#000;letter-spacing:0.002px;font-weight:400;-webkit-text-stroke:0.2px currentColor;">Description:</div>
<div style="left:907.5px;top:552.5px;width:376px;height:28.5px;background:#ffffff;border:1px solid #e0e0e0;border-bottom:1.5px solid #8a8a8a;border-radius:3px;box-sizing:border-box"></div>
<div style="left:909px;top:554px;width:370px;height:26px;overflow:hidden">
<div class="t" style="left:4.30px;top:3.86px;font-size:16px;color:#000;letter-spacing:0.127px;font-weight:400;-webkit-text-stroke:0.2px currentColor;">tains security officers to manage devices remotely</div>
</div>
<div style="left:1076.3px;top:597.8px;width:19px;height:19px;background:#f3f3f3;border:1.5px solid #7a7a7a;border-radius:4px;box-sizing:border-box"></div>
<div style="left:1076.3px;top:626.4px;width:19px;height:19px;background:#f3f3f3;border:1.5px solid #7a7a7a;border-radius:4px;box-sizing:border-box"></div>
<div class="t" style="left:1098.70px;top:601.16px;font-size:16px;color:#000;letter-spacing:-0.143px;font-weight:400;-webkit-text-stroke:0.2px currentColor;">Delete all member users</div>
<div class="t" style="left:1098.70px;top:629.46px;font-size:16px;color:#000;letter-spacing:-0.096px;font-weight:400;-webkit-text-stroke:0.2px currentColor;">Delete all member groups</div>
<div class="t" style="left:764.00px;top:689.26px;font-size:16px;color:#000;letter-spacing:-0.228px;font-weight:400;-webkit-text-stroke:0.2px currentColor;">Members:</div>
<div style="left:766px;top:706px;width:520px;height:166.5px;background:#ffffff;border:1.5px solid #6e7888;box-sizing:border-box"></div>
<div style="left:1067.5px;top:708px;width:1px;height:36px;background:#e5e5e5"></div>
<div style="left:1165px;top:708px;width:1px;height:36px;background:#e5e5e5"></div>
<div class="t" style="left:776.00px;top:718.86px;font-size:16px;color:#000;letter-spacing:-0.745px;font-weight:400;-webkit-text-stroke:0.2px currentColor;">Name</div>
<div class="t" style="left:1076.60px;top:718.86px;font-size:16px;color:#000;letter-spacing:-0.078px;font-weight:400;-webkit-text-stroke:0.2px currentColor;">Action</div>
<div class="t" style="left:1173.60px;top:718.86px;font-size:16px;color:#000;letter-spacing:-0.891px;font-weight:400;-webkit-text-stroke:0.2px currentColor;">SID</div>
<div class="t" style="left:776.00px;top:750.76px;font-size:16px;color:#000;letter-spacing:-0.329px;font-weight:400;-webkit-text-stroke:0.2px currentColor;">REINDERS\breinders</div>
<div class="t" style="left:1076.60px;top:750.76px;font-size:16px;color:#000;letter-spacing:-1.094px;font-weight:400;-webkit-text-stroke:0.2px currentColor;">ADD</div>
<div style="left:1170px;top:745px;width:113px;height:26px;overflow:hidden">
<div class="t" style="left:3.60px;top:5.76px;font-size:16px;color:#000;letter-spacing:0.165px;font-weight:400;-webkit-text-stroke:0.2px currentColor;">S-1-5-21-3437948123</div>
</div>
<div style="left:767.5px;top:846.3px;width:517px;height:25px;background:#f0f0f0"></div>
<div style="left:793px;top:856.5px;width:383px;height:3px;background:#858585;border-radius:1.5px"></div>
<div style="left:989px;top:883px;width:91px;height:32px;background:#ffffff;border:2px solid #0067c0;border-radius:4px;box-sizing:border-box"></div>
<div style="left:993px;top:887px;width:83px;height:24px;border:1px dotted #000;box-sizing:border-box"></div>
<div class="t" style="left:1010.20px;top:892.16px;font-size:16px;color:#000;letter-spacing:0.516px;font-weight:400;-webkit-text-stroke:0.2px currentColor;">Add...</div>
<div style="left:1091.8px;top:884px;width:90px;height:31px;background:#fbfbfb;border:1px solid #e6e6e6;border-radius:4px;box-sizing:border-box"></div>
<div class="t" style="left:1105.50px;top:892.16px;font-size:16px;color:#8c8c8c;letter-spacing:-0.196px;font-weight:400;-webkit-text-stroke:0.2px currentColor;">Remove</div>
<div style="left:1192.4px;top:884px;width:90px;height:31px;background:#fbfbfb;border:1px solid #e6e6e6;border-radius:4px;box-sizing:border-box"></div>
<div class="t" style="left:1198.50px;top:892.16px;font-size:16px;color:#8c8c8c;letter-spacing:0.346px;font-weight:400;-webkit-text-stroke:0.2px currentColor;">Change...</div>
<div style="left:842.8px;top:938.5px;width:108px;height:30.5px;background:#fdfdfd;border:1px solid #d0d0d0;border-bottom-color:#b5b5b5;border-radius:4px;box-sizing:border-box"></div>
<div class="t" style="left:884.15px;top:946.56px;font-size:16px;color:#000;letter-spacing:-0.909px;font-weight:400;-webkit-text-stroke:0.2px currentColor;">OK</div>
<div style="left:964.5px;top:938.5px;width:108px;height:30.5px;background:#fdfdfd;border:1px solid #d0d0d0;border-bottom-color:#b5b5b5;border-radius:4px;box-sizing:border-box"></div>
<div class="t" style="left:992.75px;top:946.56px;font-size:16px;color:#000;letter-spacing:-0.384px;font-weight:400;-webkit-text-stroke:0.2px currentColor;">Cancel</div>
<div style="left:1085.5px;top:938.5px;width:108px;height:30.5px;background:#fdfdfd;border:1px solid #d0d0d0;border-bottom-color:#b5b5b5;border-radius:4px;box-sizing:border-box"></div>
<div class="t" style="left:1117.50px;top:946.56px;font-size:16px;color:#000;letter-spacing:-0.005px;font-weight:400;-webkit-text-stroke:0.2px currentColor;">Apply</div>
<div style="left:1207px;top:938.5px;width:108px;height:30.5px;background:#fdfdfd;border:1px solid #d0d0d0;border-bottom-color:#b5b5b5;border-radius:4px;box-sizing:border-box"></div>
<div class="t" style="left:1242.50px;top:946.56px;font-size:16px;color:#000;letter-spacing:0.023px;font-weight:400;-webkit-text-stroke:0.2px currentColor;">Help</div>
<svg style="left:0;top:0" width="1589" height="1076" viewBox="0 0 1589 1076"><g stroke="#e30a0a" stroke-linecap="round" stroke-linejoin="round" fill="#e30a0a"><path d="M1120.0 378.0L983.6 423.8" fill="none" stroke-width="8.8"/><circle cx="987.9" cy="407.5" r="2.20" stroke="none"/><path d="M968.6 430.0L988.8 408.4L987.1 406.7L965.1 426.4Z" stroke-width="2"/><circle cx="997.4" cy="434.5" r="2.20" stroke="none"/><path d="M967.2 432.8L997.3 435.7L997.6 433.3L967.9 427.9Z" stroke-width="2"/><path d="M965.0 430.0L977.2 418.0L982.3 432.4Z" stroke-width="2"/><circle cx="967.9" cy="429.1" r="3.3" stroke="none"/><path d="M965.0 663.0L906.6 731.3" fill="none" stroke-width="8.8"/><circle cx="907.1" cy="708.8" r="2.20" stroke="none"/><path d="M901.7 738.7L908.3 709.1L906.0 708.5L896.9 737.4Z" stroke-width="2"/><circle cx="929.1" cy="727.6" r="2.20" stroke="none"/><path d="M902.0 741.9L929.5 728.7L928.6 726.5L900.0 737.3Z" stroke-width="2"/><path d="M898.6 740.6L903.2 723.7L914.9 733.7Z" stroke-width="2"/><circle cx="900.6" cy="738.3" r="3.3" stroke="none"/><path d="M354.0 577.6L329.6 630.9" fill="none" stroke-width="8.8"/><circle cx="325.6" cy="606.5" r="2.20" stroke="none"/><path d="M328.7 635.5L326.8 606.5L324.4 606.5L323.7 635.7Z" stroke-width="2"/><circle cx="351.4" cy="618.3" r="2.20" stroke="none"/><path d="M329.9 638.5L352.1 619.2L350.6 617.3L326.8 634.6Z" stroke-width="2"/><path d="M326.3 638.2L325.9 621.2L339.7 627.5Z" stroke-width="2"/><circle cx="327.6" cy="635.5" r="3.3" stroke="none"/></g></svg>
</body></html>
